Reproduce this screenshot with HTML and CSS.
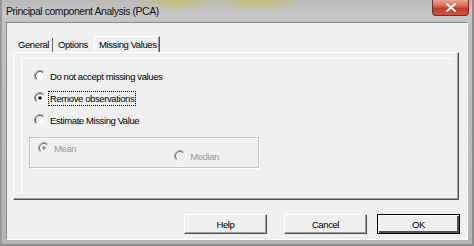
FILE: index.html
```html
<!DOCTYPE html>
<html>
<head>
<meta charset="utf-8">
<link rel="stylesheet" href="styles.css">
</head>
<body>
<div class="window">
  <div class="titlebar">
    <span class="title">Principal component Analysis (PCA)</span>
    <div class="close"><svg width="12" height="9" viewBox="0 0 12 9"><path d="M2 1 L10 8 M10 1 L2 8" stroke="#fff" stroke-width="2.2" stroke-linecap="round"/></svg></div>
  </div>
  <div class="client">
    <div class="tabs">
      <div class="tab">General</div>
      <div class="tab">Options</div>
      <div class="tab selected">Missing Values</div>
    </div>
    <div class="panel">
      <div class="frame">
        <div class="radio-row">
          <svg class="radio" width="12" height="12" viewBox="0 0 12 12"><circle cx="6" cy="6" r="4.6" fill="#fff"/><path d="M2.1 9.9 A5.5 5.5 0 0 1 9.9 2.1" fill="none" stroke="#a0a0a0"/><path d="M9.9 2.1 A5.5 5.5 0 0 1 2.1 9.9" fill="none" stroke="#fff"/><path d="M2.8 9.2 A4.5 4.5 0 0 1 9.2 2.8" fill="none" stroke="#505050"/><path d="M9.2 2.8 A4.5 4.5 0 0 1 2.8 9.2" fill="none" stroke="#e3e3e3"/></svg>
          <span class="label">Do not accept missing values</span>
        </div>
        <div class="radio-row">
          <svg class="radio" width="12" height="12" viewBox="0 0 12 12"><circle cx="6" cy="6" r="4.6" fill="#fff"/><path d="M2.1 9.9 A5.5 5.5 0 0 1 9.9 2.1" fill="none" stroke="#a0a0a0"/><path d="M9.9 2.1 A5.5 5.5 0 0 1 2.1 9.9" fill="none" stroke="#fff"/><path d="M2.8 9.2 A4.5 4.5 0 0 1 9.2 2.8" fill="none" stroke="#505050"/><path d="M9.2 2.8 A4.5 4.5 0 0 1 2.8 9.2" fill="none" stroke="#e3e3e3"/><circle cx="6" cy="6" r="1.7" fill="#000"/></svg>
          <span class="label focus">Remove observations</span>
        </div>
        <div class="radio-row">
          <svg class="radio" width="12" height="12" viewBox="0 0 12 12"><circle cx="6" cy="6" r="4.6" fill="#fff"/><path d="M2.1 9.9 A5.5 5.5 0 0 1 9.9 2.1" fill="none" stroke="#a0a0a0"/><path d="M9.9 2.1 A5.5 5.5 0 0 1 2.1 9.9" fill="none" stroke="#fff"/><path d="M2.8 9.2 A4.5 4.5 0 0 1 9.2 2.8" fill="none" stroke="#505050"/><path d="M9.2 2.8 A4.5 4.5 0 0 1 2.8 9.2" fill="none" stroke="#e3e3e3"/></svg>
          <span class="label">Estimate Missing Value</span>
        </div>
        <div class="group">
          <div class="radio-row disabled mean">
            <svg class="radio" width="12" height="12" viewBox="0 0 12 12"><circle cx="6" cy="6" r="4.6" fill="#f0f0f0"/><path d="M2.1 9.9 A5.5 5.5 0 0 1 9.9 2.1" fill="none" stroke="#a0a0a0"/><path d="M9.9 2.1 A5.5 5.5 0 0 1 2.1 9.9" fill="none" stroke="#fff"/><path d="M2.8 9.2 A4.5 4.5 0 0 1 9.2 2.8" fill="none" stroke="#707070"/><path d="M9.2 2.8 A4.5 4.5 0 0 1 2.8 9.2" fill="none" stroke="#e3e3e3"/><circle cx="6" cy="6" r="1.7" fill="#8a8a8a"/></svg>
            <span class="label">Mean</span>
          </div>
          <div class="radio-row disabled median">
            <svg class="radio" width="12" height="12" viewBox="0 0 12 12"><circle cx="6" cy="6" r="4.6" fill="#f0f0f0"/><path d="M2.1 9.9 A5.5 5.5 0 0 1 9.9 2.1" fill="none" stroke="#a0a0a0"/><path d="M9.9 2.1 A5.5 5.5 0 0 1 2.1 9.9" fill="none" stroke="#fff"/><path d="M2.8 9.2 A4.5 4.5 0 0 1 9.2 2.8" fill="none" stroke="#707070"/><path d="M9.2 2.8 A4.5 4.5 0 0 1 2.8 9.2" fill="none" stroke="#e3e3e3"/></svg>
            <span class="label">Median</span>
          </div>
        </div>
      </div>
    </div>
    <div class="buttons">
      <div class="btn help">Help</div>
      <div class="btn cancel">Cancel</div>
      <div class="btn ok">OK</div>
    </div>
  </div>
</div>
</body>
</html>
```
FILE: styles.css
```css
* { box-sizing: border-box; }
html, body { margin: 0; padding: 0; }
body {
  width: 474px;
  height: 246px;
  overflow: hidden;
  font-family: "Liberation Sans", Arial, sans-serif;
  font-size: 9.5px;
  letter-spacing: -0.4px;
  color: #000;
  background: #fff;
  white-space: nowrap;
}
.window {
  width: 474px;
  height: 246px;
  display: flex;
  flex-direction: column;
  background:
    radial-gradient(ellipse 40px 8px at 175px 3px, rgba(200,200,60,0.55), rgba(200,200,60,0) 100%),
    radial-gradient(ellipse 50px 8px at 255px 3px, rgba(200,200,60,0.55), rgba(200,200,60,0) 100%),
    linear-gradient(#b9b9b9 0px, #c8c8c8 14px, #c2c2c2 22px, #b5b5b5 100%);
  border-left: 2px solid #9a9a9a;
  border-right: 2px solid #8c8c8c;
  border-bottom: 2px solid #8c8c8c;
}
.titlebar {
  height: 22px;
  display: flex;
  justify-content: space-between;
  align-items: flex-start;
  padding-left: 4px;
  padding-right: 3px;
  flex: none;
}
.title {
  font-size: 10.5px;
  letter-spacing: -0.45px;
  margin-top: 5px;
  color: #111;
}
.close {
  width: 37px;
  height: 16px;
  border: 1px solid #7a2a22;
  border-top: none;
  border-radius: 0 0 4px 4px;
  background: linear-gradient(#e8a593 0%, #d6604b 45%, #c33a22 55%, #d2553e 100%);
  display: flex;
  align-items: center;
  justify-content: center;
}
.client {
  margin: 0 4px 4px 4px;
  flex: 1;
  background: #f0f0f0;
  border: 1px solid #8a8a8a;
  border-right-color: #ffffff;
  border-bottom-color: #ffffff;
  padding: 13px 0 0 6px;
  display: flex;
  flex-direction: column;
}
.tabs {
  display: flex;
  height: 16px;
  align-items: flex-end;
}
.tab {
  height: 14px;
  line-height: 13px;
  padding: 0 4px 0 5px;
  border-right: 1px solid #6e6e6e;
}
.tab:first-child { width: 40px; }
.tab:nth-child(2) { width: 41px; border-right: none; }
.tab.selected {
  height: 16px;
  width: 66px;
  line-height: 15px;
  border-left: 1px solid #fff;
  border-top: 1px solid #fff;
  border-right: 1px solid #505050;
  box-shadow: inset -1px 0 0 #a0a0a0;
  padding-left: 4px;
}
.panel {
  width: 446px;
  height: 148px;
  border-top: 1px solid #fff;
  border-left: 1px solid #fff;
  border-right: 1px solid #505050;
  border-bottom: 1px solid #505050;
  box-shadow: inset -1px -1px 0 #a0a0a0;
  padding: 5px 0 0 7px;
}
.frame {
  width: 431px;
  height: 136px;
  border-top: 1px solid #fff;
  border-left: 1px solid #fff;
  padding: 6px 0 0 7px;
}
.radio-row {
  height: 22px;
  display: flex;
  align-items: center;
  padding-left: 5px;
}
.radio { flex: none; margin-right: 2px; }
.label { padding: 1px 2px; line-height: 11px; }
.label.focus { border: 1px dotted #000; padding: 1px 1px; }
.group {
  margin-top: 6px;
  width: 230px;
  height: 31px;
  border: 1px solid #c8c8c8;
  box-shadow: inset 1px 1px 0 #fff, 1px 1px 0 #fff;
  display: flex;
  padding-left: 3px;
}
.disabled .label { color: #9a9a9a; }
.mean { height: 12px; margin-top: 4px; }
.median { height: 12px; margin-top: 12px; margin-left: 91px; }
.buttons {
  display: flex;
  justify-content: flex-end;
  margin-top: 14px;
  padding-right: 7px;
}
.btn {
  width: 83px;
  height: 20px;
  display: flex;
  align-items: center;
  justify-content: center;
  background: #f0f0f0;
  border-top: 1px solid #fff;
  border-left: 1px solid #fff;
  border-right: 1px solid #505050;
  border-bottom: 1px solid #505050;
  box-shadow: inset -1px -1px 0 #a0a0a0;
}
.cancel { margin-left: 17px; }
.ok {
  margin-left: 10px;
  border: 1px solid #000;
  box-shadow: inset 1px 1px 0 #fff, inset -2px -2px 0 #505050, inset -1px -1px 0 #a0a0a0;
}
```
